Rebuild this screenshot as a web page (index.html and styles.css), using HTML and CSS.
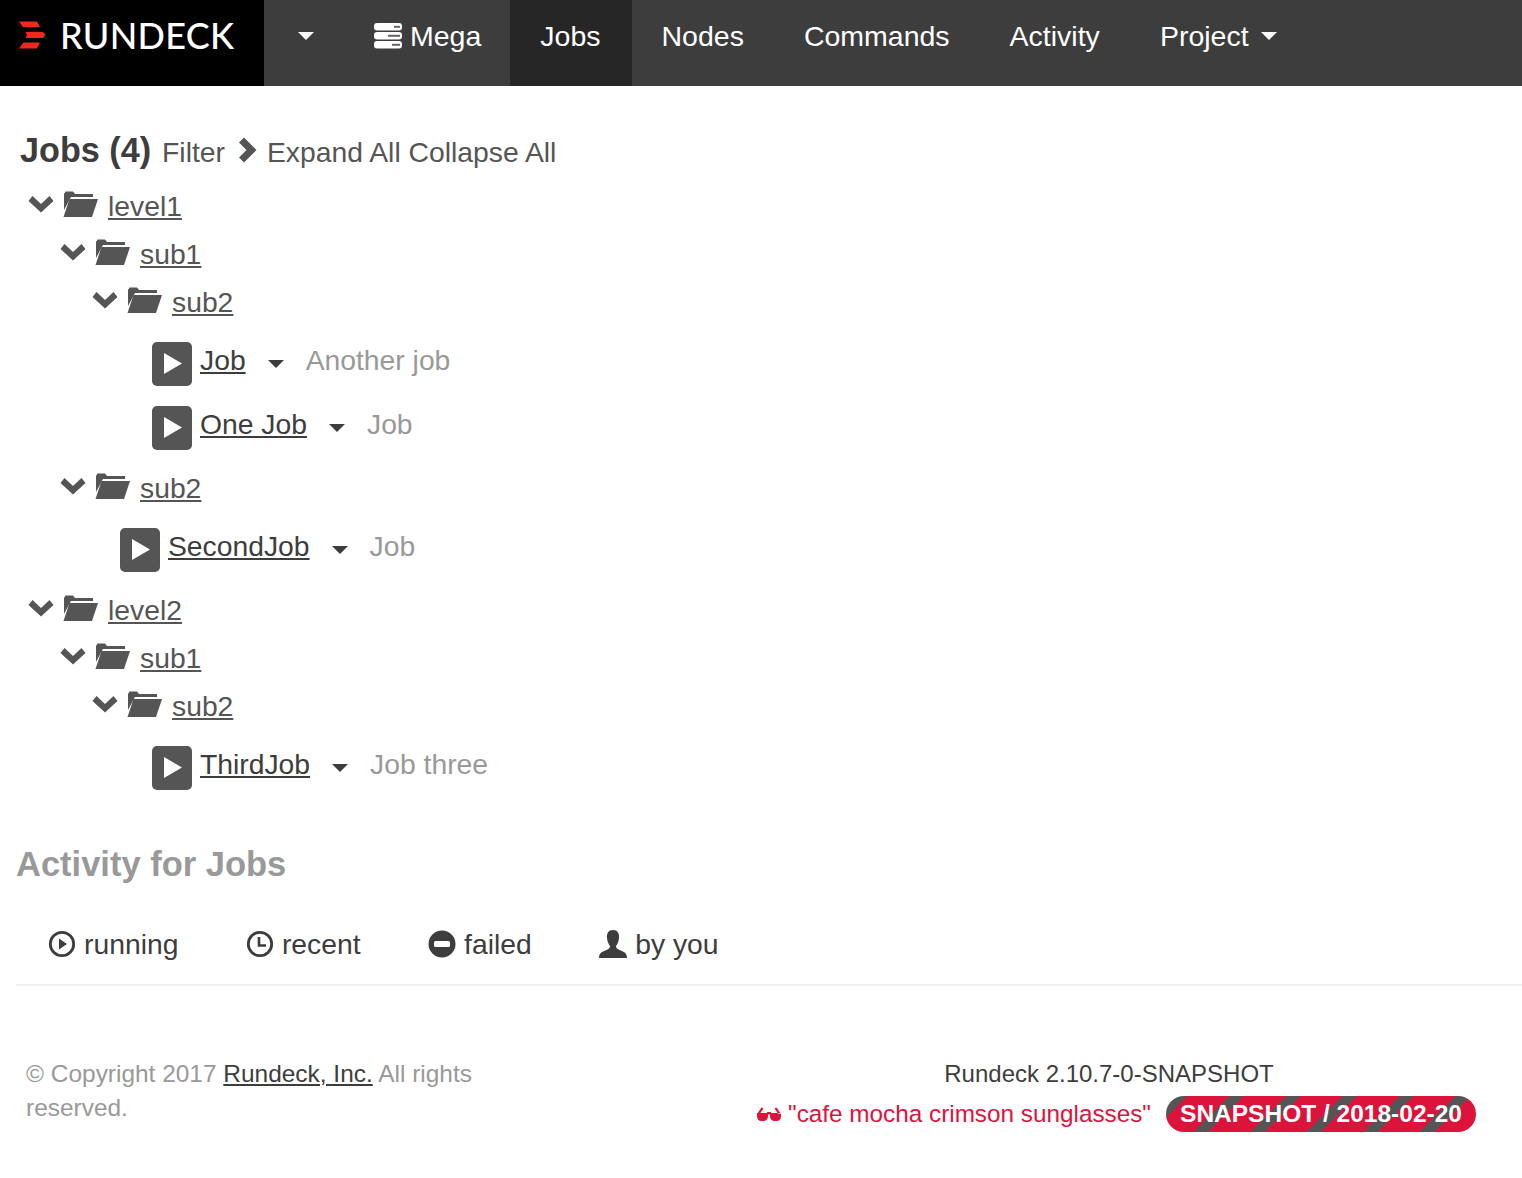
FILE: index.html
```html
<!DOCTYPE html>
<html lang="en">
<head>
  <meta charset="UTF-8" />
  <title>Jobs - Rundeck</title>
  <link rel="stylesheet" href="styles.css">
</head>
<body>
  <svg class="defs" width="0" height="0">
    <symbol id="chevron" viewBox="0 0 26 18"><path d="M0.5 6 L4.5 1 L13 9 L21.5 1 L25.5 6 L13 17.5 Z"/></symbol>
    <symbol id="folder" viewBox="0 0 36 28"><path d="M1 20 V4 L2.5 1.5 H10 L12 4 H30 V7 H8 Z"/><path d="M6.5 9 H35 L29 27 H0.5 Z"/></symbol>
    <symbol id="play" viewBox="0 0 40 44"><rect width="40" height="44" rx="5" fill="#555"/><path d="M12 11 L30 21.5 L12 32 Z" fill="#fff"/></symbol>
  </svg>

  <nav class="topbar">
    <a class="brand">
      <svg class="logo" viewBox="0 0 28 28" width="28" height="28">
        <path fill="#f0291f" d="M1 0.5 H19 L22 6 H5 Z M7.5 11 H25 L27.5 14 L25 17 H7.5 L9 14 Z M5.5 21.5 H22 L19 27.5 H1 Z"/>
      </svg>
      <span class="brand-name">RUNDECK</span>
    </a>
    <a class="nav-item nav-menu"><span class="caret"></span></a>
    <a class="nav-item nav-mega">
      <svg class="server" viewBox="0 0 28 26" width="28" height="26">
        <rect y="0" width="28" height="7.5" rx="3" fill="#fff"/><rect x="20" y="2.8" width="6" height="2" fill="#666"/>
        <rect y="9" width="28" height="7.5" rx="3" fill="#fff"/><rect x="14" y="11.8" width="12" height="2" fill="#666"/>
        <rect y="18" width="28" height="7.5" rx="3" fill="#fff"/><rect x="18" y="20.8" width="8" height="2" fill="#666"/>
      </svg>
      <span>Mega</span>
    </a>
    <a class="nav-item active">Jobs</a>
    <a class="nav-item">Nodes</a>
    <a class="nav-item">Commands</a>
    <a class="nav-item">Activity</a>
    <a class="nav-item"><span>Project</span><span class="caret"></span></a>
  </nav>

  <main class="content">
    <div class="page-head">
      <h1>Jobs (4)</h1>
      <span class="head-link">Filter</span>
      <svg class="head-chevron" viewBox="0 0 18 26" width="19" height="26"><path d="M5.5 0.5 L18 13 L5.5 25.5 L0.5 20.5 L8 13 L0.5 5.5 Z"/></svg>
      <span class="head-link">Expand All Collapse All</span>
    </div>

    <div class="tree">
      <div class="group">
        <div class="folder-row"><svg class="chev"><use href="#chevron"/></svg><svg class="fold"><use href="#folder"/></svg><a class="folder-name">level1</a></div>
        <div class="group">
          <div class="folder-row"><svg class="chev"><use href="#chevron"/></svg><svg class="fold"><use href="#folder"/></svg><a class="folder-name">sub1</a></div>
          <div class="group">
            <div class="folder-row"><svg class="chev"><use href="#chevron"/></svg><svg class="fold"><use href="#folder"/></svg><a class="folder-name">sub2</a></div>
            <div class="jobs">
              <div class="job-row"><svg class="run"><use href="#play"/></svg><a class="job-name">Job</a><span class="caret dark"></span><span class="job-desc">Another job</span></div>
              <div class="job-row"><svg class="run"><use href="#play"/></svg><a class="job-name">One Job</a><span class="caret dark"></span><span class="job-desc">Job</span></div>
            </div>
          </div>
        </div>
        <div class="group">
          <div class="folder-row"><svg class="chev"><use href="#chevron"/></svg><svg class="fold"><use href="#folder"/></svg><a class="folder-name">sub2</a></div>
          <div class="jobs">
            <div class="job-row"><svg class="run"><use href="#play"/></svg><a class="job-name">SecondJob</a><span class="caret dark"></span><span class="job-desc">Job</span></div>
          </div>
        </div>
      </div>
      <div class="group">
        <div class="folder-row"><svg class="chev"><use href="#chevron"/></svg><svg class="fold"><use href="#folder"/></svg><a class="folder-name">level2</a></div>
        <div class="group">
          <div class="folder-row"><svg class="chev"><use href="#chevron"/></svg><svg class="fold"><use href="#folder"/></svg><a class="folder-name">sub1</a></div>
          <div class="group">
            <div class="folder-row"><svg class="chev"><use href="#chevron"/></svg><svg class="fold"><use href="#folder"/></svg><a class="folder-name">sub2</a></div>
            <div class="jobs">
              <div class="job-row"><svg class="run"><use href="#play"/></svg><a class="job-name">ThirdJob</a><span class="caret dark"></span><span class="job-desc">Job three</span></div>
            </div>
          </div>
        </div>
      </div>
    </div>

    <h2 class="activity-title">Activity for Jobs</h2>
    <div class="tabs">
      <a class="tab">
        <svg viewBox="0 0 28 28" width="28" height="28"><circle cx="14" cy="14" r="11.7" fill="none" stroke="#3d3d3d" stroke-width="2.8"/><path d="M11 8.5 L19 14 L11 19.5 Z" fill="#3d3d3d"/></svg>
        <span>running</span>
      </a>
      <a class="tab">
        <svg viewBox="0 0 28 28" width="28" height="28"><circle cx="14" cy="14" r="11.7" fill="none" stroke="#3d3d3d" stroke-width="2.8"/><path d="M13 7 V15.5 H20" fill="none" stroke="#3d3d3d" stroke-width="2.6"/></svg>
        <span>recent</span>
      </a>
      <a class="tab">
        <svg viewBox="0 0 28 28" width="28" height="28"><circle cx="14" cy="14" r="13.5" fill="#3d3d3d"/><rect x="6" y="11" width="16" height="6" rx="1.5" fill="#fff"/></svg>
        <span>failed</span>
      </a>
      <a class="tab">
        <svg viewBox="0 0 28 28" width="28" height="28"><path fill="#3d3d3d" d="M14 0 C18.5 0 20.5 3.5 20 8 C19.7 11.5 18.5 14 17 16 C17 18 18 19 21 20.2 C25 21.7 28 23 28 28 H0 C0 23 3 21.7 7 20.2 C10 19 11 18 11 16 C9.5 14 8.3 11.5 8 8 C7.5 3.5 9.5 0 14 0 Z"/></svg>
        <span>by you</span>
      </a>
    </div>
  </main>

  <footer class="footer">
    <div class="copyright">
      <span>© Copyright 2017</span> <a>Rundeck, Inc.</a> <span>All rights</span><br>
      <span>reserved.</span>
    </div>
    <div class="version">
      <div class="version-name">Rundeck 2.10.7-0-SNAPSHOT</div>
      <div class="version-line">
        <span class="codename">
          <svg viewBox="0 0 26 14" width="26" height="14"><path fill="#dc143c" d="M1 6 H12 V9 C12 12 10 14 7 14 H5.5 C2.5 14 1 12 1 9 Z M14 6 H25 V9 C25 12 23.5 14 20.5 14 H19 C16 14 14 12 14 9 Z M11 5 H15 V7.5 H11 Z M1 7 L5.5 0.5 L7.5 1.5 L4 6.5 Z M25 7 L20.5 0.5 L18.5 1.5 L22 6.5 Z"/></svg>
          <span>"cafe mocha crimson sunglasses"</span>
        </span>
        <span class="snapshot">SNAPSHOT / 2018-02-20</span>
      </div>
    </div>
  </footer>
</body>
</html>
```

FILE: styles.css
```css
* {
  box-sizing: border-box;
}
body {
  margin: 0;
  font-family: "Liberation Sans", Arial, sans-serif;
  font-size: 28.3px;
  color: #3d3d3d;
  background: #fff;
}
a {
  color: inherit;
}
.defs {
  display: block;
  height: 0;
}
.topbar {
  display: flex;
  height: 86px;
  background: #3d3d3d;
  color: #fff;
}
.brand {
  display: flex;
  align-items: center;
  gap: 14px;
  width: 264px;
  padding: 0 0 14px 18px;
  background: #000;
}
.logo {
  flex: none;
  margin-top: -3px;
}
.brand-name {
  margin-top: -2px;
  font-family: Lato, sans-serif;
  font-size: 36px;
  font-weight: 500;
  letter-spacing: 0.3px;
}
.nav-item {
  display: flex;
  align-items: center;
  padding: 0 30px 14px;
  font-size: 28.5px;
}
.nav-item.active {
  padding-right: 31px;
  background: #262626;
}
.nav-menu {
  padding-left: 34px;
}
.nav-menu .caret {
  margin-left: 0;
}
.nav-mega {
  padding-right: 29px;
}
.server {
  margin-right: 8px;
}
.caret {
  display: inline-block;
  width: 0;
  height: 0;
  margin-left: 12px;
  border-top: 8px solid #fff;
  border-left: 8px solid transparent;
  border-right: 8px solid transparent;
}
.caret.dark {
  margin: 2px 22px 0 22px;
  border-top-color: #3d3d3d;
}
.content {
  padding: 0 0 0 16px;
}
.page-head {
  display: flex;
  align-items: center;
  height: 48px;
  margin-top: 40px;
  padding-left: 4px;
  color: #555;
}
.page-head h1 {
  margin: 0 11px 0 0;
  font-size: 34.2px;
  font-weight: 600;
  color: #3d3d3d;
}
.head-link {
  margin-top: 5px;
}
.head-chevron {
  margin: -1px 10px 0 13px;
  fill: #555;
}
.tree {
  margin-top: 8px;
  padding-left: 12px;
}
.group .group {
  margin-left: 32px;
}
.folder-row {
  display: flex;
  align-items: center;
  height: 48px;
  color: #555;
}
.chev {
  width: 26px;
  height: 18px;
  margin: -5px 9px 0 0;
  fill: #555;
}
.fold {
  width: 36px;
  height: 28px;
  margin: -4px 9px 0 0;
  fill: #555;
}
.folder-name {
  text-decoration: underline;
}
.jobs {
  padding: 5px 0 5px 60px;
}
.job-row {
  display: flex;
  align-items: center;
  height: 64px;
}
.run {
  width: 40px;
  height: 44px;
  margin: 2px 8px 0 0;
}
.job-name {
  text-decoration: underline;
  margin-top: -5px;
}
.job-desc {
  color: #999;
  margin-top: -5px;
}
.activity-title {
  margin: 41px 0 0;
  font-size: 34.5px;
  font-weight: 600;
  color: #999;
}
.tabs {
  display: flex;
  gap: 67.5px;
  height: 102px;
  padding: 45px 0 0 32px;
  border-bottom: 2px solid #eee;
}
.tab {
  display: flex;
  align-items: center;
  gap: 8px;
  height: 30px;
}
.footer {
  display: flex;
  margin-top: 71px;
  font-size: 24.3px;
}
.copyright {
  width: 480px;
  padding-left: 26px;
  font-size: 24.45px;
  line-height: 34px;
  color: #999;
}
.copyright a {
  color: #3d3d3d;
  text-decoration: underline;
}
.version {
  width: 1042px;
  display: flex;
  flex-direction: column;
  align-items: center;
  padding-left: 216px;
}
.version-name {
  font-size: 24px;
  line-height: 34px;
}
.version-line {
  display: flex;
  align-items: center;
  gap: 15px;
  margin: 5px 0 0 14px;
  white-space: nowrap;
}
.codename {
  display: flex;
  align-items: center;
  gap: 6px;
  color: #dc143c;
}
.snapshot {
  display: inline-block;
  width: 310px;
  height: 36px;
  line-height: 36px;
  border-radius: 18px;
  text-align: center;
  font-size: 24.5px;
  font-weight: bold;
  color: #fff;
  background: repeating-linear-gradient(135deg, #dc143c 0 5px, #555 5px 15px, #dc143c 15px 40px);
}
```
